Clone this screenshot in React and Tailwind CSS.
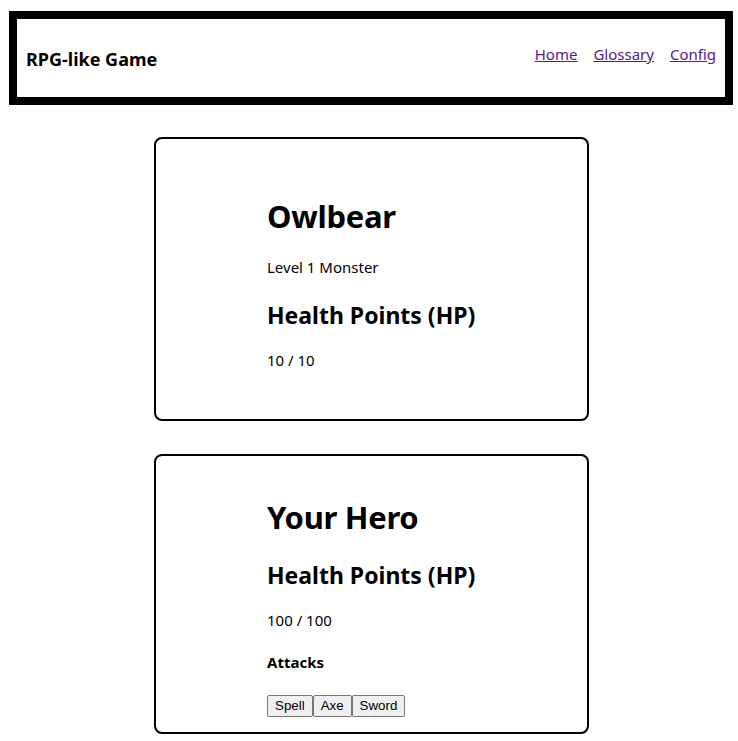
import React from 'react';

const Btn = ({ children }) => (
    <button className="h-[22px] px-[7px] border border-[#767676] rounded-[2px] bg-[#efefef] text-[13.33px] leading-[20px] text-black" style={{ fontFamily: '"Liberation Sans", Arial, sans-serif' }}>
        {children}
    </button>
);

const App = () => {
    return (
        <div className="min-h-[741px] bg-white text-black pt-[11px] pb-[8px]" style={{ fontFamily: '"Noto Sans", "Open Sans", sans-serif' }}>
            {/* header */}
            <header className="ml-[9px] w-[724px] h-[94px] border-[8px] border-black flex items-center justify-between px-[9px]">
                <div className="text-[18px] font-bold leading-[24px] mt-[2px]">RPG-like Game</div>
                <nav className="flex gap-[16px] text-[15px] leading-[22px] mb-[8px]">
                    <a href="#" className="underline text-[#551a8b]">Home</a>
                    <a href="#" className="underline text-[#551a8b]">Glossary</a>
                    <a href="#" className="underline text-[#551a8b]">Config</a>
                </nav>
            </header>

            <main className="flex flex-col gap-[33px] mt-[32px] ml-[154px]">
                <section className="w-[435px] border-2 border-black rounded-[8px] pl-[111px] pt-[57px] pb-[47px]">
                    <h1 className="text-[31px] font-bold leading-[40px] tracking-[-0.3px]">Owlbear</h1>
                    <p className="mt-[19px] text-[15px] leading-[24px]">Level 1 Monster</p>
                    <h2 className="mt-[20px] text-[23px] font-bold leading-[32px]">Health Points (HP)</h2>
                    <p className="mt-[17px] text-[15px] leading-[24px]">10 / 10</p>
                </section>

                <section className="w-[435px] border-2 border-black rounded-[8px] pl-[111px] pt-[41px] pb-[15px]">
                    <h1 className="text-[31px] font-bold leading-[40px] tracking-[-0.3px]">Your Hero</h1>
                    <h2 className="mt-[22px] text-[23px] font-bold leading-[32px]">Health Points (HP)</h2>
                    <p className="mt-[17px] text-[15px] leading-[24px]">100 / 100</p>
                    <h4 className="mt-[18px] text-[15px] font-bold leading-[24px]">Attacks</h4>
                    <div className="mt-[21px] flex">
                        <Btn>Spell</Btn>
                        <Btn>Axe</Btn>
                        <Btn>Sword</Btn>
                    </div>
                </section>
            </main>
        </div>
    );
};

export default App;
